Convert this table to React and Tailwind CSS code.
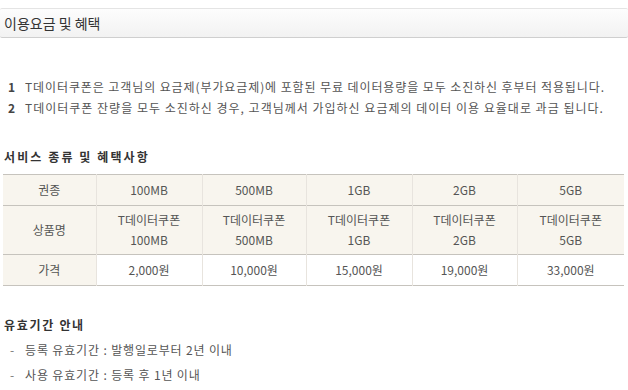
const font = { fontFamily: '"Noto Sans CJK KR", "Noto Sans", sans-serif' };

const plans = [
  { size: '100MB', price: '2,000원' },
  { size: '500MB', price: '10,000원' },
  { size: '1GB', price: '15,000원' },
  { size: '2GB', price: '19,000원' },
  { size: '5GB', price: '33,000원' },
];

export default function App() {
  return (
    <div className="w-[628px] h-[390px] bg-white overflow-hidden text-[#555]" style={font}>
      <div className="pt-2">
        <div className="h-[30px] flex items-center px-[4px] rounded-[2px] border-t border-[#e4e4e4] border-b border-b-[#cfcfcf] bg-gradient-to-b from-[#fdfdfd] to-[#f2f2f2]">
          <h2 className="text-[14px] text-[#333] leading-none">이용요금 및 혜택</h2>
        </div>
      </div>

      <ol className="mt-[41px] flex flex-col gap-[6px] text-[12px] leading-none">
        <li className="flex items-center h-[15px]">
          <span className="w-[25px] pl-[8px] font-bold text-[#444]">1</span>
          <span className="tracking-[0.9px]">T데이터쿠폰은 고객님의 요금제(부가요금제)에 포함된 무료 데이터용량을 모두 소진하신 후부터 적용됩니다.</span>
        </li>
        <li className="flex items-center h-[15px]">
          <span className="w-[25px] pl-[8px] font-bold text-[#444]">2</span>
          <span className="tracking-[1px]">T데이터쿠폰 잔량을 모두 소진하신 경우, 고객님께서 가입하신 요금제의 데이터 이용 요율대로 과금 됩니다.</span>
        </li>
      </ol>

      <h3 className="mt-[36px] px-[4px] text-[12px] font-bold text-[#333] leading-none tracking-[2.1px]">서비스 종류 및 혜택사항</h3>

      <div className="mt-[11px] mx-[3px] w-[621px]">
        <table className="w-full border-collapse text-[12px] text-[#555] text-center leading-[20px]">
          <colgroup>
            <col className="w-[93px]" />
            <col className="w-[106px]" />
            <col className="w-[104px]" />
            <col className="w-[106px]" />
            <col className="w-[105px]" />
            <col />
          </colgroup>
          <tbody>
            <tr className="h-[31px] bg-[#f8f5ee] border-t border-b border-[#c6c3bd]">
              <td className="border-r border-[#e8e4de]">권종</td>
              {plans.map((p, i) => (
                <td key={p.size} className={i < 4 ? 'border-r border-[#e8e4de]' : ''}>{p.size}</td>
              ))}
            </tr>
            <tr className="h-[49px] bg-[#f8f5ee] border-b border-[#c6c3bd]">
              <td className="border-r border-[#e8e4de]">상품명</td>
              {plans.map((p, i) => (
                <td key={p.size} className={i < 4 ? 'border-r border-[#e8e4de]' : ''}>
                  T데이터쿠폰
                  <br />
                  {p.size}
                </td>
              ))}
            </tr>
            <tr className="h-[31px] border-b border-[#c6c3bd]">
              <td className="bg-[#f8f5ee] border-r border-[#e8e4de]">가격</td>
              {plans.map((p, i) => (
                <td key={p.size} className={i < 4 ? 'border-r border-[#e8e4de]' : ''}>{p.price}</td>
              ))}
            </tr>
          </tbody>
        </table>
      </div>

      <h3 className="mt-[33px] px-[4px] text-[12px] font-bold text-[#333] leading-none tracking-[1.7px]">유효기간 안내</h3>

      <ul className="mt-[11px] flex flex-col gap-[10px] text-[12px] leading-none tracking-[0.85px]">
        <li className="flex items-center h-[15px]">
          <span className="w-[25px] pl-[10px] text-[#777]">-</span>
          <span>등록 유효기간 : 발행일로부터 2년 이내</span>
        </li>
        <li className="flex items-center h-[15px]">
          <span className="w-[25px] pl-[10px] text-[#777]">-</span>
          <span>사용 유효기간 : 등록 후 1년 이내</span>
        </li>
      </ul>
    </div>
  );
}
